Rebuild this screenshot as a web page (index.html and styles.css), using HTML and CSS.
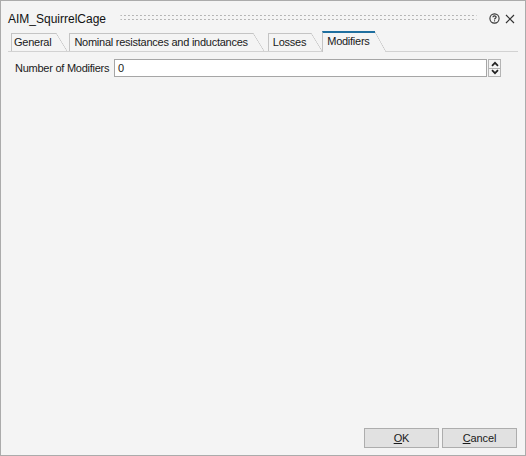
FILE: index.html
```html
<!DOCTYPE html>
<html>
<head>
<meta charset="utf-8">
<link rel="stylesheet" href="styles.css">
</head>
<body>
<div class="window">
  <div class="titlebar">
    <span class="title">AIM_SquirrelCage</span>
    <svg class="grip" width="356" height="7" viewBox="0 0 356 7">
      <defs>
        <pattern id="dots" x="0" y="0" width="4" height="4" patternUnits="userSpaceOnUse">
          <rect x="0" y="0" width="1" height="1" fill="#7a7a7a"/>
        </pattern>
      </defs>
      <rect x="0" y="0" width="356" height="6" fill="url(#dots)"/>
    </svg>
    <svg class="help" width="11" height="11" viewBox="0 0 11 11">
      <circle cx="5.5" cy="5.5" r="4.6" fill="none" stroke="#333" stroke-width="1.1"/>
      <path d="M3.9 4.3 C3.9 3.3 4.6 2.9 5.5 2.9 C6.4 2.9 7.1 3.4 7.1 4.2 C7.1 5.2 5.5 5.2 5.5 6.4" fill="none" stroke="#333" stroke-width="1.1"/>
      <rect x="5" y="7.3" width="1.1" height="1.1" fill="#333"/>
    </svg>
    <svg class="close" width="10" height="10" viewBox="0 0 10 10">
      <path d="M1 1 L9 9 M9 1 L1 9" stroke="#333" stroke-width="1.2"/>
    </svg>
  </div>
  <div class="tabstrip">
    <div class="tab"><span class="tab-label">General</span></div>
    <div class="tab"><span class="tab-label">Nominal resistances and inductances</span></div>
    <div class="tab"><span class="tab-label">Losses</span></div>
    <div class="tab active"><span class="tab-label">Modifiers</span></div>
  </div>
  <div class="panel">
    <div class="row">
      <span class="label">Number of Modifiers</span>
      <div class="field">0</div>
      <div class="spin">
        <div class="spin-btn">
          <svg width="8" height="6" viewBox="0 0 8 6"><path d="M1 4.8 L4 1.8 L7 4.8" fill="none" stroke="#222" stroke-width="1.7"/></svg>
        </div>
        <div class="spin-btn">
          <svg width="8" height="6" viewBox="0 0 8 6"><path d="M1 1.2 L4 4.2 L7 1.2" fill="none" stroke="#222" stroke-width="1.7"/></svg>
        </div>
      </div>
    </div>
  </div>
  <div class="footer">
    <button class="btn"><u>O</u>K</button>
    <button class="btn"><u>C</u>ancel</button>
  </div>
</div>
</body>
</html>
```
FILE: styles.css
```css
* { box-sizing: border-box; }
html, body { margin: 0; padding: 0; }
body {
  width: 526px;
  height: 456px;
  background: #f4f4f4;
  font-family: "Liberation Sans", Arial, sans-serif;
  font-size: 11px;
  letter-spacing: -0.25px;
  color: #1a1a1a;
}
.window {
  width: 526px;
  height: 456px;
  border: 1px solid #ababab;
  background: #f4f4f4;
  display: flex;
  flex-direction: column;
}
.titlebar {
  height: 31px;
  padding: 4px 10px 0 7px;
  display: flex;
  align-items: center;
}
.title {
  font-size: 12px;
  letter-spacing: 0;
  color: #111;
}
.grip {
  margin-left: 14px;
  margin-right: 3px;
  flex: 1;
  height: 7px;
}
.help { margin-left: 9px; }
.close { margin-left: 5px; }

.tabstrip {
  height: 20px;
  margin: 0 7px;
  padding-left: 3px;
  display: flex;
  align-items: flex-end;
  border-bottom: 1px solid #d2d2d2;
}
.tab {
  position: relative;
  height: 18px;
  padding-right: 11px;
  margin-right: 2px;
  display: flex;
}
.tab::after {
  content: "";
  position: absolute;
  top: 0;
  right: 0;
  width: 11px;
  height: 100%;
  background: linear-gradient(to top right, transparent calc(50% - 0.6px), #c4c4c4 50%, transparent calc(50% + 0.6px));
}
.tab-label {
  display: block;
  border-left: 1px solid #c4c4c4;
  border-top: 1px solid #c4c4c4;
  padding: 0 5px 0 2px;
  line-height: 17px;
  white-space: nowrap;
  color: #1a1a1a;
}
.tab:nth-child(2) .tab-label { padding-left: 4px; }
.tab:nth-child(3) { margin-left: 2px; }
.tab:nth-child(3) .tab-label { padding-left: 4px; }
.tab.active {
  height: 21px;
  margin-bottom: -1px;
  margin-left: -2px;
  background: #f4f4f4;
}
.tab.active::after { height: 20px; top: 1px; }
.tab.active .tab-label {
  border-top: 2px solid #1f6f9f;
  padding-left: 4px;
  line-height: 17px;
  padding-bottom: 2px;
}

.panel {
  flex: 1;
  padding: 7px 0 0 14px;
}
.row {
  display: flex;
  align-items: center;
  height: 18px;
}
.label {
  width: 99px;
  white-space: nowrap;
}
.field {
  width: 373px;
  height: 18px;
  border: 1px solid #a6a6a6;
  background: #fff;
  padding-left: 3px;
  line-height: 16px;
}
.spin {
  margin-left: 1px;
  width: 13px;
  height: 18px;
  display: flex;
  flex-direction: column;
  border: 1px solid #b4b4b4;
  background: #f4f4f4;
}
.spin-btn {
  flex: 1;
  display: flex;
  align-items: center;
  justify-content: center;
}
.spin-btn + .spin-btn { border-top: 1px solid #b4b4b4; }

.footer {
  display: flex;
  justify-content: flex-end;
  gap: 3px;
  padding: 0 8px 7px 0;
}
.btn {
  width: 75px;
  height: 20px;
  border: 1px solid #adadad;
  background: #e1e1e1;
  font-family: "Liberation Sans", Arial, sans-serif;
  font-size: 11px;
  letter-spacing: -0.1px;
  color: #1a1a1a;
  padding: 0;
  margin: 0;
}
```
